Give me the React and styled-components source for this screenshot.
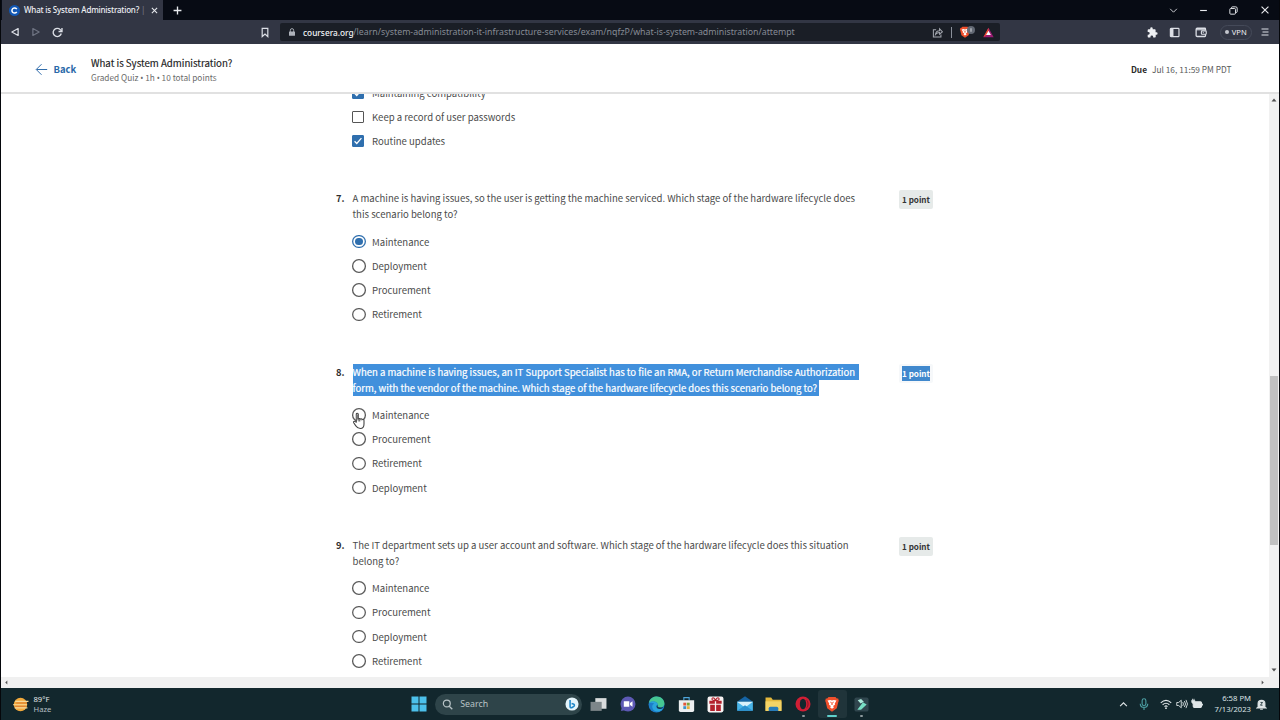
import styled, { createGlobalStyle } from 'styled-components';

const GlobalStyle = createGlobalStyle`
  * {
    box-sizing: border-box;
  }
  body {
    margin: 0;
    background: #05070b;
  }
  svg {
    display: block;
    flex: none;
  }
`;

const StyledScreen = styled.div`
  width: 1280px;
  height: 720px;
  overflow: hidden;
  padding: 0 1px;
  background: #05070b;
  display: grid;
  grid-template-rows: 20px 24px 50px 583px 11px 32px;
  font-family: 'Noto Sans', 'Open Sans', sans-serif;
  white-space: nowrap;
`;

/* browser */

const StyledTabBar = styled.div`
  background: #070b14;
  display: flex;
  align-items: center;
  color: #e8eaee;
`;

const StyledTab = styled.div`
  width: 161px;
  height: 20px;
  margin-left: 1px;
  padding: 0 5px 0 7px;
  background: #323644;
  display: flex;
  align-items: center;
  justify-content: space-between;
`;

const StyledTabTitle = styled.span`
  width: 123px;
  margin-left: 4px;
  margin-right: auto;
  font-size: 8px;
  font-weight: 500;
  letter-spacing: -0.19px;
  line-height: 20px;
  color: #eef0f4;

  i {
    font-style: normal;
    color: #747986;
    margin-left: 2px;
  }
`;

const StyledNewTab = styled.div`
  margin-left: 10px;
`;

const StyledWindowButtons = styled.div`
  margin-left: auto;
  margin-right: 9.5px;
  display: flex;
  align-items: center;
  gap: 21.3px;
`;

const StyledToolbar = styled.div`
  background: #323644;
  display: flex;
  align-items: center;
  color: #dcdfe6;
`;

const StyledNavButtons = styled.div`
  display: flex;
  align-items: center;
  gap: 11px;
  padding-left: 9px;
  width: 259px;
`;

const StyledAddress = styled.div`
  width: 720px;
  height: 18px;
  margin-left: 10px;
  padding: 0 7px 0 8px;
  border-radius: 2px;
  background: #1a1e26;
  display: flex;
  align-items: center;
  font-size: 8.81px;
  color: #868b95;

  b {
    font-weight: 500;
    font-size: 8.3px;
    color: #f2f4f7;
    margin-left: 7px;
    width: 50.3px;
  }
`;

const StyledAddressIcons = styled.div`
  margin-left: auto;
  margin-right: -1px;
  display: flex;
  align-items: center;
  color: #a4a8b0;
`;

const StyledDivider = styled.span`
  width: 1px;
  height: 11px;
  margin: 0 7px 0 8px;
  background: #8b909a;
`;

const StyledExtensions = styled.div`
  margin-left: auto;
  margin-right: 10px;
  display: flex;
  align-items: center;
`;

const StyledVpn = styled.div`
  width: 32px;
  height: 15px;
  margin: 0 9px 0 13px;
  border: 1px solid #454a59;
  border-radius: 8px;
  display: flex;
  align-items: center;
  justify-content: center;
  gap: 2.5px;
  font-size: 7.6px;
  color: #f0f1f4;

  &::before {
    content: '';
    width: 4px;
    height: 4px;
    border-radius: 50%;
    background: #c3c6cd;
  }
`;

/* quiz page */

const quizFont = "'Noto Sans CJK SC', 'Noto Sans', sans-serif";

const StyledHeader = styled.header`
  background: #fff;
  border-bottom: 2px solid #e1e1e1;
  font-family: ${quizFont};
  display: flex;
  align-items: center;
  padding-left: 34px;
  padding-right: 47.500px;
`;

const StyledBack = styled.a`
  width: 56px;
  display: flex;
  align-items: center;
  gap: 5.5px;
  margin-top: 2px;
  font-size: 9.5px;
  font-weight: 700;
  color: #2b69a9;
`;

const StyledHeading = styled.div`
  padding-top: 2px;

  h1 {
    margin: 0;
    font-size: 9.69px;
    font-weight: 400;
    line-height: 16px;
    color: #222;
    -webkit-text-stroke: 0.15px #222;
  }
  p {
    margin: 0;
    font-size: 8.28px;
    line-height: 12px;
    color: #6b6b6b;
  }
  i {
    font-family: 'Noto Sans', sans-serif;
    font-style: normal;
  }
`;

const StyledDue = styled.div`
  margin-left: auto;
  margin-top: 1px;
  font-size: 8.33px;
  color: #5a5a5a;

  b {
    color: #2a2a2a;
    margin-right: 5px;
  }
`;

const StyledViewport = styled.div`
  display: grid;
  grid-template-columns: 1fr 10px;
  overflow: hidden;
  background: #fff;
`;

const StyledQuiz = styled.main`
  height: 583px;
  overflow: hidden;
  padding-left: 335px;
  font-family: ${quizFont};
  color: #4b4b4b;
  font-size: 9.55px;
`;

const StyledQuestion = styled.section`
  display: grid;
  grid-template-columns: 16.5px 546.5px 34px;
  margin-bottom: 37.1px;
  margin-top: ${(props) => (props.$scrolled ? '-13.6px' : 0)};
`;

const StyledNumber = styled.b`
  font-size: 9.3px;
  line-height: 16px;
  color: #2d2d2d;
`;

const StyledPrompt = styled.div`
  margin-bottom: 7px;
  line-height: 16px;

  p {
    margin: 0;
    height: 16px;
  }
  span {
    display: inline-block;
    height: 16.5px;
    ${(props) => props.$selected && 'background: #4190dc; color: #fff; padding-right: 3.5px; -webkit-text-stroke: 0.2px #fff;'}
  }
  p + p span {
    ${(props) => props.$selected && 'padding-right: 1.5px;'}
  }
`;

const StyledPoint = styled.div`
  width: 34px;
  height: 19px;
  border-radius: 2px;
  background: ${(props) => (props.$selected ? '#f6f8fa' : '#e6eae9')};
  display: flex;
  align-items: center;
  justify-content: center;
  font-size: 8.11px;
  font-weight: 700;
  color: ${(props) => (props.$selected ? '#fff' : '#333')};

  span {
    padding: 0 0.5px;
    line-height: 15px;
    ${(props) => props.$selected && 'background: #4088cd;'}
  }
`;

const StyledOption = styled.label`
  height: 24.3px;
  display: flex;
  align-items: center;
  position: relative;
  gap: 6.5px;
`;

const StyledRadio = styled.span`
  width: 13.5px;
  height: 13.5px;
  margin-left: -0.5px;
  border-radius: 50%;
  box-shadow: inset 0 0 0 1.3px ${(props) => (props.$checked ? '#2f6fae' : '#5c5c5c')};
  display: grid;
  place-items: center;

  &::after {
    content: '';
    width: 7.5px;
    height: 7.5px;
    border-radius: 50%;
    background: ${(props) => (props.$checked ? '#2f6fae' : 'transparent')};
  }
`;

const StyledCheckbox = styled.span`
  width: 12px;
  height: 12px;
  margin: 0 1.2px 0 -0.2px;
  border: 1px solid ${(props) => (props.$checked ? '#2f6fae' : '#555')};
  border-radius: 1px;
  background: ${(props) => (props.$checked ? '#2f6fae' : '#fff')};
`;

const StyledCursor = styled.svg`
  position: absolute;
  left: -1px;
  top: 9px;
`;

const StyledScrollbar = styled.div`
  background: #f1f1f1;
  display: flex;
  flex-direction: column;
  align-items: center;
  padding: 3px 0 4px;
`;

const StyledThumb = styled.div`
  width: 8px;
  height: 169px;
  margin-top: 273px;
  margin-bottom: auto;
  background: #c1c1c1;
`;

const StyledBottomScroll = styled.div`
  background: #f0f0f0;
  display: flex;
  align-items: center;
  justify-content: space-between;
  padding: 0 14px 0 3px;
`;

/* taskbar */

const StyledTaskbar = styled.footer`
  background: #12272d;
  display: flex;
  align-items: center;
  color: #dfe5e7;
`;

const StyledWeather = styled.div`
  width: 403px;
  padding-left: 11px;
  display: flex;
  align-items: center;
  gap: 4.5px;
  font-size: 7.6px;
  line-height: 10.5px;
  color: #e6eaeb;

  div > div + div {
    color: #b5bfc2;
  }
`;

const StyledSearch = styled.div`
  width: 146.500px;
  height: 21px;
  margin: 0 2px;
  padding: 0 3px 0 7px;
  border-radius: 11px;
  background: #2e4449;
  display: flex;
  align-items: center;
  font-size: 8.8px;
  color: #b8c3c6;

  span {
    margin-left: 7px;
    margin-right: auto;
  }
`;

const StyledApp = styled.div`
  width: 29.25px;
  height: 28px;
  display: flex;
  align-items: center;
  justify-content: center;
  position: relative;
  border-radius: 3px;
  background: ${(props) => (props.$active ? '#20343a' : 'transparent')};

  &::after {
    content: '';
    position: absolute;
    bottom: 1px;
    width: ${(props) => (props.$active ? '10px' : '3px')};
    height: 2px;
    border-radius: 1px;
    background: ${(props) => (props.$active ? '#5fd0cc' : props.$running ? '#8c999c' : 'transparent')};
  }
`;

const StyledTray = styled.div`
  margin-left: auto;
  margin-right: 12px;
  display: flex;
  align-items: center;
`;

const StyledClock = styled.div`
  width: 41px;
  margin-right: 5px;
  text-align: right;
  font-size: 7.7px;
  line-height: 10.7px;
  color: #dbe2e4;
`;

const Svg = ({ w = 12, h = w, box = 16, children, ...rest }) => (
  <svg width={w} height={h} viewBox={`0 0 ${box} ${box}`} fill="none" stroke="currentColor" strokeWidth="1.5" {...rest}>
    {children}
  </svg>
);

const BraveIcon = ({ size }) => (
  <Svg w={size} stroke="none">
    <path d="M4.5 1h7l1.3 1.4 1.4.2.6 2.3-.5 1.2-1.5 6.2L8 15.8l-4.8-3.5L1.700 6.100l-.5-1.200.6-2.300 1.400-.2z" fill="#f0502c" />
    <path d="M3.500 4.500l2.600-.6L8 4.500l1.900-.6 2.600.6-1.700 3.100.2 1.200-2 1.200L10 11.200 8 12.700l-2-1.500L7 10 5 8.800l.2-1.200z" fill="#fff" />
    <path d="M6 6l1.600.6L8 9l.4-2.400L10 6" stroke="#f0502c" strokeWidth=".7" />
  </Svg>
);

const Arrow = ({ d, size = 6 }) => (
  <svg width={size} height={size} viewBox="0 0 6 6"><path d={d} fill="#505050" /></svg>
);

const Mail = () => (
  <Svg w={18} stroke="none">
    <path d="M1 6l7-5 7 5z" fill="#1564a4" />
    <path d="M1 6h14v8H1z" fill="#48b4e8" />
    <path d="M1 6l7 5 7-5z" fill="#d9f1fb" />
    <path d="M1 14l7-5 7 5z" fill="#2c91cf" />
  </Svg>
);

const questions = [
  {
    number: '7.',
    lines: ['A machine is having issues, so the user is getting the machine serviced. Which stage of the hardware lifecycle does', 'this scenario belong to?'],
    options: ['Maintenance', 'Deployment', 'Procurement', 'Retirement'],
    answer: 0,
  },
  {
    number: '8.',
    lines: ['When a machine is having issues, an IT Support Specialist has to file an RMA, or Return Merchandise Authorization', 'form, with the vendor of the machine. Which stage of the hardware lifecycle does this scenario belong to?'],
    options: ['Maintenance', 'Procurement', 'Retirement', 'Deployment'],
    selected: true,
    pointer: 0,
  },
  {
    number: '9.',
    lines: ['The IT department sets up a user account and software. Which stage of the hardware lifecycle does this situation', 'belong to?'],
    options: ['Maintenance', 'Procurement', 'Deployment', 'Retirement'],
  },
];

const checks = [
  { label: 'Maintaining compatibility', checked: true },
  { label: 'Keep a record of user passwords', checked: false },
  { label: 'Routine updates', checked: true },
];

const Pointer = () => (
  <StyledCursor width="14" height="18" viewBox="0 0 14 18">
    <path
      d="M4.300 10V2.300c0-1.500 2-1.500 2 0V7c.5-.8 1.800-.6 1.900.2.600-.7 1.800-.5 1.900.4.700-.6 1.900-.2 1.900.8v3.500c0 2.800-1.300 4.600-3.700 4.600-2.200 0-3.300-.6-4.300-2.400L1.700 10.800c-.7-1.300.7-2 1.600-1.100z"
      fill="#fff"
      stroke="#444"
      strokeWidth="1.100"
    />
    <path d="M4.300 2.500h2v5h-2zM6.300 7h2v2.500h-2z" fill="#777" />
  </StyledCursor>
);

const Question = ({ item }) => (
  <StyledQuestion>
    <StyledNumber>{item.number}</StyledNumber>
    <div>
      <StyledPrompt $selected={item.selected}>
        {item.lines.map((line) => (
          <p key={line}><span>{line}</span></p>
        ))}
      </StyledPrompt>
      {item.options.map((option, index) => (
        <StyledOption key={option}>
          <StyledRadio $checked={item.answer === index} />
          {option}
          {item.pointer === index && <Pointer />}
        </StyledOption>
      ))}
    </div>
    <StyledPoint $selected={item.selected}><span>1 point</span></StyledPoint>
  </StyledQuestion>
);

const Browser = () => (
  <>
    <StyledTabBar>
      <StyledTab>
        <Svg w={11} stroke="none">
          <circle cx="8" cy="8" r="8" fill="#1258b5" />
          <path d="M11.300 6A3.800 3.800 0 1 0 11.300 10" stroke="#fff" strokeWidth="2.200" />
        </Svg>
        <StyledTabTitle>What is System Administration?<i>|</i></StyledTabTitle>
        <Svg w={7}><path d="M2 2l12 12M14 2L2 14" strokeWidth="2.400" /></Svg>
      </StyledTab>
      <StyledNewTab><Svg w={9}><path d="M8 1v14M1 8h14" strokeWidth="2.400" /></Svg></StyledNewTab>
      <StyledWindowButtons>
        <Svg w={9}><path d="M2 5l6 6 6-6" /></Svg>
        <Svg w={9}><path d="M2 8h12" strokeWidth="2" /></Svg>
        <Svg w={9}>
          <rect x="1.500" y="4.500" width="10" height="10" rx="1.500" strokeWidth="1.700" />
          <path d="M4.500 4V3q0-1.500 1.500-1.500h6Q14.500 1.500 14.500 4v6q0 1.500-2 1.500" strokeWidth="1.700" />
        </Svg>
        <Svg w={10}><path d="M2.500 2.500l11 11M13.500 2.500l-11 11" strokeWidth="1.800" /></Svg>
      </StyledWindowButtons>
    </StyledTabBar>
    <StyledToolbar>
      <StyledNavButtons>
        <Svg w={10}><path d="M13 2.500v11L3 8z" strokeWidth="2" strokeLinejoin="round" /></Svg>
        <Svg w={10} color="#6e7382"><path d="M3 2.500v11L13 8z" strokeWidth="2" strokeLinejoin="round" /></Svg>
        <Svg w={11}>
          <path d="M13.500 9.500A6 6 0 1 1 12 3.800L14 5.800" strokeWidth="2" />
          <path d="M14.500 1.500v5h-5" strokeWidth="2" />
        </Svg>
      </StyledNavButtons>
      <Svg w={10} h={11}><path d="M3.500 1.500h9v13L8 10.500l-4.500 4z" strokeWidth="1.900" /></Svg>
      <StyledAddress>
        <Svg w={8} color="#aeb2ba">
          <rect x="2" y="7" width="12" height="8.500" rx="1" fill="currentColor" stroke="none" />
          <path d="M4.700 8V4.500a3.300 3.300 0 0 1 6.600 0V8" strokeWidth="1.800" />
        </Svg>
        <b>coursera.org</b>
        <span>/learn/system-administration-it-infrastructure-services/exam/nqfzP/what-is-system-administration/attempt</span>
        <StyledAddressIcons>
          <Svg w={11}>
            <path d="M6 4H2v10.500h11V11" />
            <path d="M5 11c.5-4 3-5.500 6-5.500V2.500L15.200 7 11 10.500V8c-3 0-4.500 1-6 3z" />
          </Svg>
          <StyledDivider />
          <BraveIcon size={12} />
          <Svg w={8} style={{ margin: '-5px 0 0 -4px' }} stroke="none">
            <circle cx="8" cy="8" r="8" fill="#626873" />
            <path d="M7 4.500h2v7H7z" fill="#d5d8dd" />
          </Svg>
          <Svg w={11} stroke="none" style={{ marginLeft: 8 }}>
            <path d="M8 1L15.500 15H.5z" fill="#9a1c73" />
            <path d="M8 1v5l-3 5.500L.5 15z" fill="#ed4b2a" />
            <path d="M8 5.500l3.500 6h-7z" fill="#fff" />
          </Svg>
        </StyledAddressIcons>
      </StyledAddress>
      <StyledExtensions>
        <Svg w={11} stroke="none">
          <path d="M13.500 7.500h-1V4.500c0-.8-.6-1.400-1.400-1.400H8.300V2.200a1.800 1.800 0 0 0-3.600 0v.9H2.300C1.500 3.100 1 3.700 1 4.500v2.700h.9a2 2 0 0 1 0 4H1v2.700c0 .8.6 1.400 1.400 1.400H5v-.9a2 2 0 0 1 4 0v.9h2.300c.8 0 1.400-.6 1.400-1.400v-2.800h.9a1.800 1.800 0 0 0 0-3.600z" fill="#eef0f3" />
        </Svg>
        <Svg w={11} style={{ marginLeft: 11 }}>
          <rect x="2" y="2" width="12.500" height="12" rx="1" strokeWidth="1.700" />
          <path d="M2 2h4.500v12H2z" fill="currentColor" stroke="none" />
        </Svg>
        <Svg w={12} style={{ marginLeft: 15 }}>
          <path d="M14 6V4q0-1-1-1H3Q1.500 3 1.500 4.500v8Q1.500 14 3 14h10q1 0 1-1v-2" strokeWidth="1.700" />
          <path d="M1.500 5h12" />
          <rect x="8.500" y="6.500" width="6.500" height="4.500" rx="1" />
          <circle cx="11" cy="8.700" r=".8" fill="currentColor" stroke="none" />
        </Svg>
        <StyledVpn>VPN</StyledVpn>
        <Svg w={8}><path d="M1 2h14M3 8h12M1 14h14" strokeWidth="2" /></Svg>
      </StyledExtensions>
    </StyledToolbar>
  </>
);

const Quiz = () => (
  <>
    <StyledHeader>
      <StyledBack>
        <Svg w={13}><path d="M15 8H2M8 1.500L1.500 8 8 14.500" strokeWidth="1.200" /></Svg>
        Back
      </StyledBack>
      <StyledHeading>
        <h1>What is System Administration?</h1>
        <p>Graded Quiz <i>•</i> 1h <i>•</i> 10 total points</p>
      </StyledHeading>
      <StyledDue><b>Due</b>Jul 16, 11:59 PM PDT</StyledDue>
    </StyledHeader>
    <StyledViewport>
      <StyledQuiz>
        <StyledQuestion $scrolled>
          <span />
          <div>
            {checks.map((item) => (
              <StyledOption key={item.label}>
                <StyledCheckbox $checked={item.checked}>
                  {item.checked && (
                    <Svg w={10} stroke="#fff"><path d="M2.500 8.500L6 12l7.500-8.500" strokeWidth="2" /></Svg>
                  )}
                </StyledCheckbox>
                {item.label}
              </StyledOption>
            ))}
          </div>
        </StyledQuestion>
        {questions.map((item) => <Question key={item.number} item={item} />)}
      </StyledQuiz>
      <StyledScrollbar>
        <Arrow d="M.5 4.500L3 1.500l2.500 3z" />
        <StyledThumb />
        <Arrow d="M.5 1.500L3 4.500l2.500-3z" />
      </StyledScrollbar>
    </StyledViewport>
    <StyledBottomScroll>
      <Arrow d="M4 .5L1.500 3 4 5.500z" size={5} />
      <Arrow d="M2 .5L4.500 3 2 5.500z" size={5} />
    </StyledBottomScroll>
  </>
);

const Taskbar = () => (
  <StyledTaskbar>
    <StyledWeather>
      <Svg w={17} stroke="none">
        <circle cx="8" cy="8" r="6.300" fill="#f2a93b" />
        <path d="M3 5h12.500M1 8.200h13M2.500 11.200h12" stroke="#f6d99a" strokeWidth="1.100" />
        <path d="M4 6.600h10M3 9.700h10" stroke="#d97833" strokeWidth=".9" />
      </Svg>
      <div>
        <div>89°F</div>
        <div>Haze</div>
      </div>
    </StyledWeather>
    <StyledApp>
      <Svg w={16} stroke="none">
        <path d="M.5.500h7v7h-7zM8.500.500h7v7h-7zM.5 8.500h7v7h-7zM8.500 8.500h7v7h-7z" fill="#4cc0ea" />
      </Svg>
    </StyledApp>
    <StyledSearch>
      <Svg w={11}>
        <circle cx="7" cy="6.500" r="5" strokeWidth="1.800" />
        <path d="M10.500 10.500L15 15" strokeWidth="1.800" />
      </Svg>
      <span>Search</span>
      <Svg w={14} stroke="none">
        <circle cx="8" cy="8" r="7.500" fill="#e4f4fb" />
        <path d="M5.800 3.500v7.300c0 1.500 1.300 1.800 2.300 1.200l2-1.200c1.200-.9.600-2.500-.6-2.900L7.500 7.300" stroke="#1f87c9" strokeWidth="1.800" />
      </Svg>
    </StyledSearch>
    <StyledApp>
      <Svg w={17} stroke="none">
        <path d="M5 2h10.500v10H5z" fill="#d9dcdd" />
        <path d="M.5 5.500H11v8.500H.5z" fill="#7d868a" />
      </Svg>
    </StyledApp>
    <StyledApp>
      <Svg w={16} stroke="none">
        <circle cx="8" cy="8" r="7.500" fill="#5d59b4" />
        <path d="M1 15l1-5 4 4z" fill="#5d59b4" />
        <path d="M3.800 5.200h5.500v5.600H3.800zM10 7l2.500-1.800v5.600L10 9z" fill="#fff" />
      </Svg>
    </StyledApp>
    <StyledApp>
      <Svg w={17} stroke="none">
        <circle cx="8" cy="8" r="7.500" fill="#1c7cc9" />
        <path d="M.7 6.500C2 2 5 .5 8.300.5c4.200 0 7.200 3.300 7.200 6.500 0 2.500-2 3.800-4 3.800-1.800 0-2.500-.8-2.500-1.300C10.500 6 5 3.500.7 6.500z" fill="#46c793" />
        <path d="M.6 7C4 3.500 9 5.500 9.300 8.200 8.800 8 8 8.300 8 9.700c0 2 3 3.500 6 2-2 3.800-9 4.500-10-1C3.700 9 4.500 7.500 6 7 4 6 1.500 6 .6 7z" fill="#2aa5dc" />
        <path d="M9.300 8C8.200 9 9 10.800 11.500 10.800c1.500 0 2.500-.5 3-.8-.5 1.200-1.500 2-3 2.200C8 12.500 7 9.500 9.300 8z" fill="#12394c" />
      </Svg>
    </StyledApp>
    <StyledApp>
      <Svg w={17} stroke="none">
        <path d="M5.500 4V1.500h5V4" stroke="#4ea6db" strokeWidth="1" />
        <path d="M.8 4h14.400v9.500q0 1.500-1.500 1.500H2.300Q.8 15 .8 13.500z" fill="#eceff0" />
        <path d="M5 6.300h2.700V9H5z" fill="#e2573a" />
        <path d="M8.300 6.300H11V9H8.300z" fill="#7da438" />
        <path d="M5 9.600h2.700v2.700H5z" fill="#3c94ca" />
        <path d="M8.300 9.600H11v2.700H8.300z" fill="#e8b13a" />
      </Svg>
    </StyledApp>
    <StyledApp>
      <Svg w={17} stroke="none">
        <rect x=".5" y=".5" width="15" height="15" rx="2" fill="#f7f2f2" />
        <path d="M2.200 4.500h5.200v2.800H2.200zM8.600 4.500h5.200v2.800H8.600zM3 8.300h4.400v5.700H3zM8.600 8.300H13v5.700H8.600z" fill="#b3202c" />
        <path d="M8 4.500C5 4.500 4 3 5 2s2.500.5 3 2.500C8.500 2.500 10 1 11 2s0 2.500-3 2.500z" stroke="#b3202c" strokeWidth="1" />
      </Svg>
    </StyledApp>
    <StyledApp><Mail /></StyledApp>
    <StyledApp>
      <Svg w={17} stroke="none">
        <path d="M.5 1.500h5.300l1.500 2h8.200V14H.5z" fill="#e5b93c" />
        <path d="M.5 5h15v9H.5z" fill="#f4d466" />
        <path d="M3.500 14v-2.500q0-1.500 1.500-1.500h6q1.500 0 1.500 1.500V14z" fill="#287cb9" />
      </Svg>
    </StyledApp>
    <StyledApp $running>
      <Svg w={16} stroke="none">
        <circle cx="8" cy="8" r="7.500" fill="#d01f35" />
        <ellipse cx="8" cy="8" rx="3.200" ry="5.300" fill="#12272d" />
        <path d="M11 3.500c2 2.500 2 6.500 0 9 3.500-1.500 3.500-7.500 0-9z" fill="#8e1425" />
      </Svg>
    </StyledApp>
    <StyledApp $active><BraveIcon size={16} /></StyledApp>
    <StyledApp $running>
      <Svg w={15} stroke="none">
        <rect x=".5" y=".5" width="15" height="15" rx="2" fill="#30464e" />
        <path d="M4 3.500l3.500-1.500 3 3-3.500 2z" fill="#aeeadb" />
        <path d="M9.500 5.500L13.500 8l-6 5.500H3.500z" fill="#77dfc4" />
      </Svg>
    </StyledApp>
    <StyledTray>
      <Svg w={9}><path d="M2 11l6-6 6 6" strokeWidth="2" /></Svg>
      <Svg w={12} color="#4d9fa3" style={{ marginLeft: 10 }}>
        <rect x="5.500" y="1" width="5" height="9" rx="2.500" />
        <path d="M3 7.500c0 6.500 10 6.500 10 0M8 12.500V16" />
      </Svg>
      <Svg w={12} style={{ marginLeft: 10 }}>
        <path d="M1 6.500q7-6.500 14 0M3.500 9q4.500-4 9 0M6 11.500q2-1.800 4 0" />
        <circle cx="8" cy="13.500" r="1.200" fill="currentColor" stroke="none" />
      </Svg>
      <Svg w={12} style={{ marginLeft: 4 }}>
        <path d="M1 6h2.500L7 3v10L3.500 10H1zM9 5.500q1.800 2.500 0 5M11.200 4q3 4 0 8M13.300 2.500q4 5.500 0 11" strokeWidth="1.200" />
      </Svg>
      <Svg w={12} style={{ marginLeft: 3 }}>
        <rect x="3" y="5" width="11" height="7.500" rx="1.500" fill="currentColor" />
        <path d="M15.500 7.500v2.500" />
        <path d="M1 3h4v3q-2 3-4 0zM2 1v2M4 1v2" fill="currentColor" strokeWidth="1" />
      </Svg>
      <StyledClock style={{ marginLeft: 7 }}>
        <div>6:58 PM</div>
        <div>7/13/2023</div>
      </StyledClock>
      <Svg w={11}>
        <path d="M3 12V6.500C3 .5 13 .5 13 6.500V12l1.500 1h-13z" fill="currentColor" />
        <path d="M6 14.800h4" />
        <path d="M6.500 5h3l-3 4h3" stroke="#12272d" strokeWidth="1.200" />
      </Svg>
    </StyledTray>
  </StyledTaskbar>
);

export default function App() {
  return (
    <>
      <GlobalStyle />
      <StyledScreen>
        <Browser />
        <Quiz />
        <Taskbar />
      </StyledScreen>
    </>
  );
}
